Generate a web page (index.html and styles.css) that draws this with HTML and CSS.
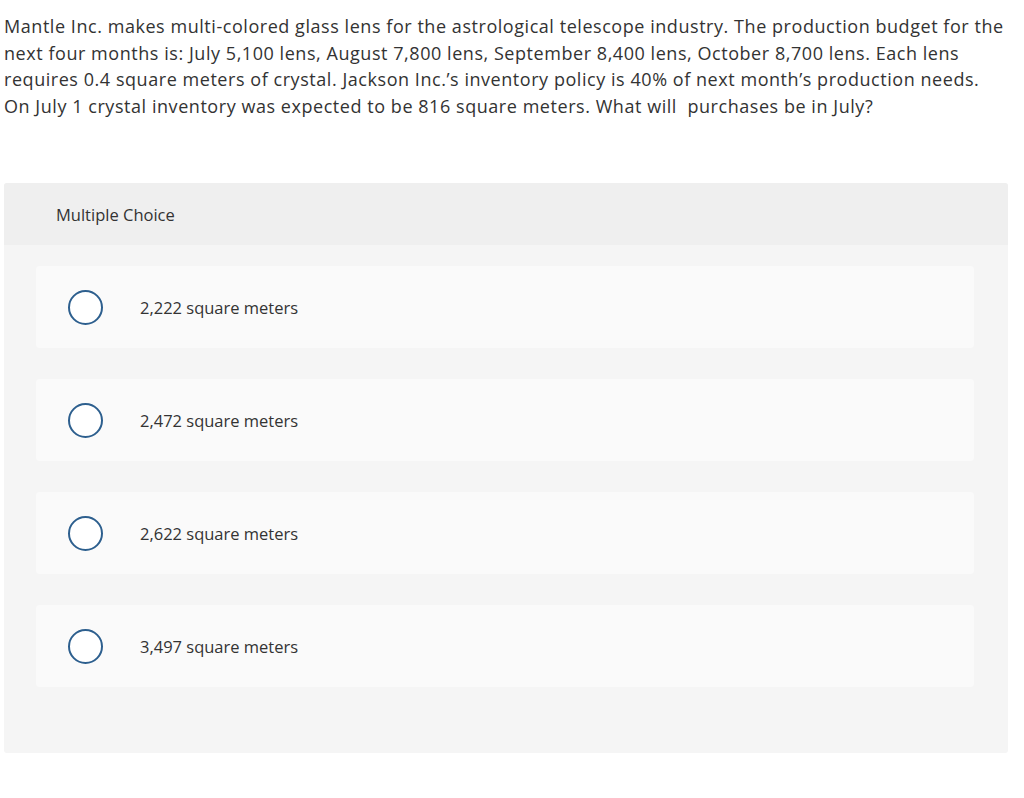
FILE: index.html
```html
<!DOCTYPE html>
<html>
<head>
<meta charset="utf-8">
<link rel="stylesheet" href="styles.css">
</head>
<body>
<div class="page">
  <p class="question">Mantle Inc. makes multi-colored glass lens for the astrological telescope industry. The production budget for the next four months is: July 5,100 lens, August 7,800 lens, September 8,400 lens, October 8,700 lens. Each lens requires 0.4 square meters of crystal. Jackson Inc.’s inventory policy is 40% of next month’s production needs. On July 1 crystal inventory was expected to be 816 square meters. What will &nbsp;purchases be in July?</p>
  <div class="panel">
    <div class="panel-head">Multiple Choice</div>
    <div class="options">
      <div class="option"><span class="radio"></span><span class="label">2,222 square meters</span></div>
      <div class="option"><span class="radio"></span><span class="label">2,472 square meters</span></div>
      <div class="option"><span class="radio"></span><span class="label">2,622 square meters</span></div>
      <div class="option"><span class="radio"></span><span class="label">3,497 square meters</span></div>
    </div>
  </div>
</div>
</body>
</html>
```
FILE: styles.css
```css
html, body {
  margin: 0;
  padding: 0;
  background: #fff;
}
body {
  font-family: "Open Sans", Lato, sans-serif;
  color: #333;
}
.page {
  padding: 13px 16px 0 4px;
}
.question {
  margin: 0;
  font-size: 18px;
  letter-spacing: 0.55px;
  line-height: 26.5px;
  color: #333;
  max-width: 1006px;
}
.panel {
  margin-top: 64px;
  width: 1004px;
  background: #f5f5f5;
  border-radius: 3px;
  overflow: hidden;
}
.panel-head {
  background: #efefef;
  height: 62px;
  padding-left: 52px;
  display: flex;
  align-items: center;
  font-size: 16.5px;
  color: #333;
}
.options {
  display: flex;
  flex-direction: column;
  gap: 31px;
  padding: 21px 34px 66px 32px;
}
.option {
  height: 82px;
  background: #fafafa;
  border-radius: 4px;
  display: flex;
  align-items: center;
  padding-left: 32px;
}
.radio {
  width: 31px;
  height: 31px;
  border: 2px solid #2d5f8e;
  border-radius: 50%;
  background: #fff;
  flex: none;
}
.label {
  margin-left: 37px;
  font-size: 16.5px;
  color: #333;
}
```
